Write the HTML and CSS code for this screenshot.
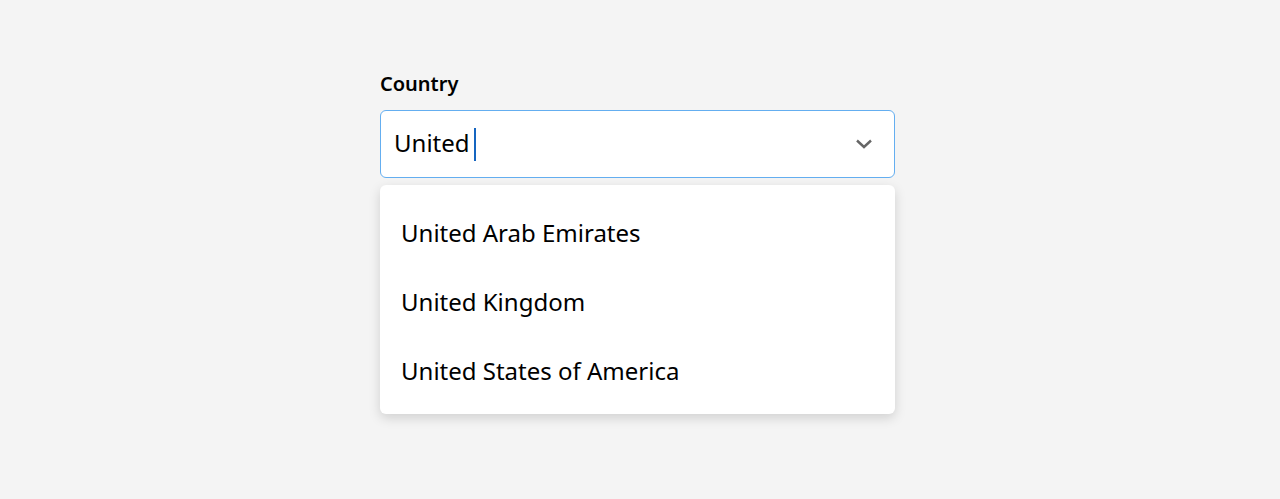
FILE: index.html
```html
<!DOCTYPE html>
<html lang="en">
<head>
<meta charset="utf-8">
<title>Country</title>
<link rel="stylesheet" href="styles.css">
</head>
<body>
<div class="field">
  <label class="label" for="country">Country</label>
  <div class="combo">
    <span class="value">United</span><span class="caret"></span>
    <svg class="chevron" width="20" height="20" viewBox="0 0 20 20" aria-hidden="true"><path d="M3 6.5 L10 13 L17 6.5" fill="none" stroke="#666" stroke-width="2.4"/></svg>
  </div>
  <ul class="menu">
    <li class="option">United Arab Emirates</li>
    <li class="option">United Kingdom</li>
    <li class="option">United States of America</li>
  </ul>
</div>
</body>
</html>
```
FILE: styles.css
```css
html, body { margin: 0; padding: 0; }
body {
  background: #f4f4f4;
  font-family: "Noto Sans", sans-serif;
  color: #000;
  height: 499px;
}
.field {
  width: 515px;
  margin-left: 380px;
  padding-top: 70px;
  display: flex;
  flex-direction: column;
}
.label {
  font-size: 20px;
  font-weight: 600;
  line-height: 28px;
  margin-bottom: 12px;
}
.combo {
  box-sizing: border-box;
  height: 68px;
  background: #fff;
  border: 1.5px solid #64aef0;
  border-radius: 6px;
  display: flex;
  align-items: center;
  padding: 0 20px 0 13px;
}
.value { font-size: 24px; line-height: 32px; margin-bottom: 2px; }
.caret {
  width: 2px;
  height: 33px;
  background: #1565c0;
  margin-left: 4px;
}
.chevron { margin-left: auto; }
.menu {
  list-style: none;
  margin: 7px 0 0;
  padding: 13px 0 9px;
  background: #fff;
  border-radius: 6px;
  box-shadow: 0 4px 12px rgba(0,0,0,0.15);
}
.option {
  height: 69px;
  line-height: 69px;
  padding: 0 21px;
  font-size: 24px;
}
```
